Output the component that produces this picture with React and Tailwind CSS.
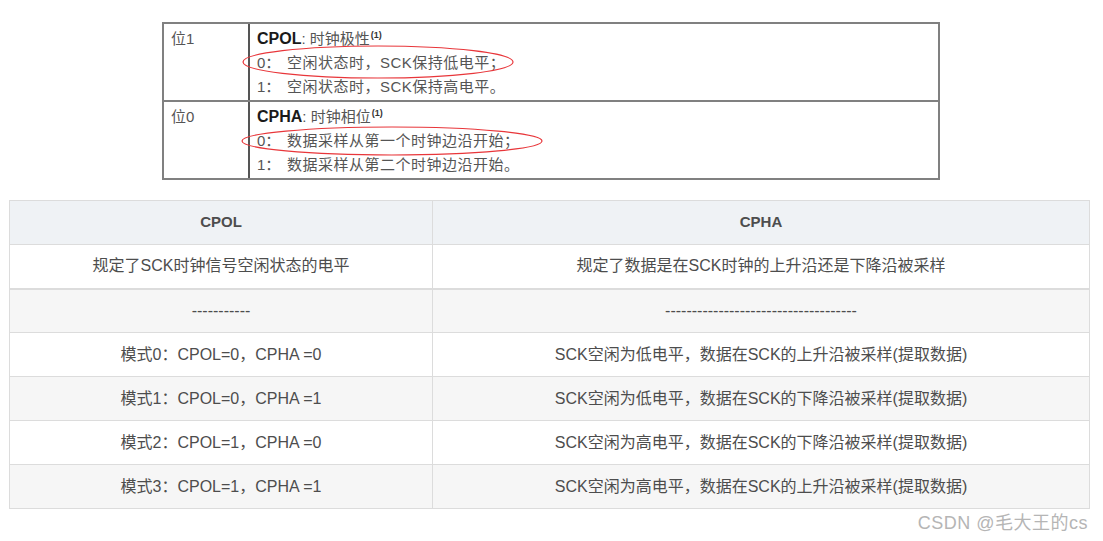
import React from "react";

const font = { fontFamily: '"Liberation Sans", "Noto Sans CJK SC", sans-serif' };

const rows = [
  { a: "规定了SCK时钟信号空闲状态的电平", b: "规定了数据是在SCK时钟的上升沿还是下降沿被采样", bg: "bg-white", thick: true },
  { a: "-----------", b: "------------------------------------", bg: "bg-[#f6f6f6]" },
  { a: "模式0：CPOL=0，CPHA =0", b: "SCK空闲为低电平，数据在SCK的上升沿被采样(提取数据)", bg: "bg-white" },
  { a: "模式1：CPOL=0，CPHA =1", b: "SCK空闲为低电平，数据在SCK的下降沿被采样(提取数据)", bg: "bg-[#f6f6f6]" },
  { a: "模式2：CPOL=1，CPHA =0", b: "SCK空闲为高电平，数据在SCK的下降沿被采样(提取数据)", bg: "bg-white" },
  { a: "模式3：CPOL=1，CPHA =1", b: "SCK空闲为高电平，数据在SCK的上升沿被采样(提取数据)", bg: "bg-[#f6f6f6]" },
];

function Field({ name, title, zero, one }) {
  return (
    <div className="pl-[7px] pt-[3px] text-[15px] leading-[24px] text-[#555]">
      <div>
        <span className="font-bold text-[16px] text-[#1a1a1a]">{name}</span>: {title}
        <span className="relative -top-[6px] ml-[1px] text-[9px] leading-none font-bold text-[#333]">(1)</span>
      </div>
      <div>
        <span className="inline-block w-[30px]">0：</span>
        <span className="tracking-[0.5px]">{zero}</span>
      </div>
      <div>
        <span className="inline-block w-[30px]">1：</span>
        <span className="tracking-[0.5px]">{one}</span>
      </div>
    </div>
  );
}

export default function App() {
  return (
    <div className="w-[1103px] h-[541px] bg-white overflow-hidden" style={font}>
      {/* 寄存器说明截图 */}
      <div className="relative mt-[22px] ml-[162px] w-[778px] border-2 border-[#808080]">
        <div className="grid grid-cols-[86px_1fr] h-[78px] border-b-2 border-[#808080]">
          <div className="border-r-2 border-[#555] pl-[7px] pt-[3px] text-[15px] leading-[24px] text-[#555]">位1</div>
          <Field name="CPOL" title="时钟极性" zero="空闲状态时，SCK保持低电平；" one="空闲状态时，SCK保持高电平。" />
        </div>
        <div className="grid grid-cols-[86px_1fr] h-[76px]">
          <div className="border-r-2 border-[#555] pl-[7px] pt-[3px] text-[15px] leading-[24px] text-[#555]">位0</div>
          <Field name="CPHA" title="时钟相位" zero="数据采样从第一个时钟边沿开始；" one="数据采样从第二个时钟边沿开始。" />
        </div>
        <svg className="absolute inset-0 pointer-events-none overflow-visible" width="774" height="154">
          <ellipse cx="214" cy="38" rx="135" ry="16" fill="none" stroke="#e8363a" strokeWidth="1.2" />
          <ellipse cx="228" cy="117" rx="150" ry="14" fill="none" stroke="#e8363a" strokeWidth="1.2" />
        </svg>
      </div>

      {/* 模式对照表 */}
      <table className="ml-[9px] mt-[20px] w-[1081px] border-collapse text-[16px] text-[#4d4d4d] table-fixed">
        <thead>
          <tr className="bg-[#eff2f5] h-[44px]">
            <th className="w-[423px] border border-[#dcdcdc] font-bold text-[15px]">CPOL</th>
            <th className="border border-[#dcdcdc] font-bold text-[15px]">CPHA</th>
          </tr>
        </thead>
        <tbody>
          {rows.map((r, i) => (
            <tr key={i} className={`${r.bg} h-[44px] ${r.thick ? "border-b-2 border-[#dcdcdc]" : ""}`}>
              <td className={`border border-[#dcdcdc] text-center ${r.thick ? "border-b-2" : ""}`}>{r.a}</td>
              <td className={`border border-[#dcdcdc] text-center ${r.thick ? "border-b-2" : ""}`}>{r.b}</td>
            </tr>
          ))}
        </tbody>
      </table>

      <div className="text-right pr-[15px] pt-[3px] text-[18px] tracking-[0.5px] leading-[22px] text-[#b5b5b5]">CSDN @毛大王的cs</div>
    </div>
  );
}
